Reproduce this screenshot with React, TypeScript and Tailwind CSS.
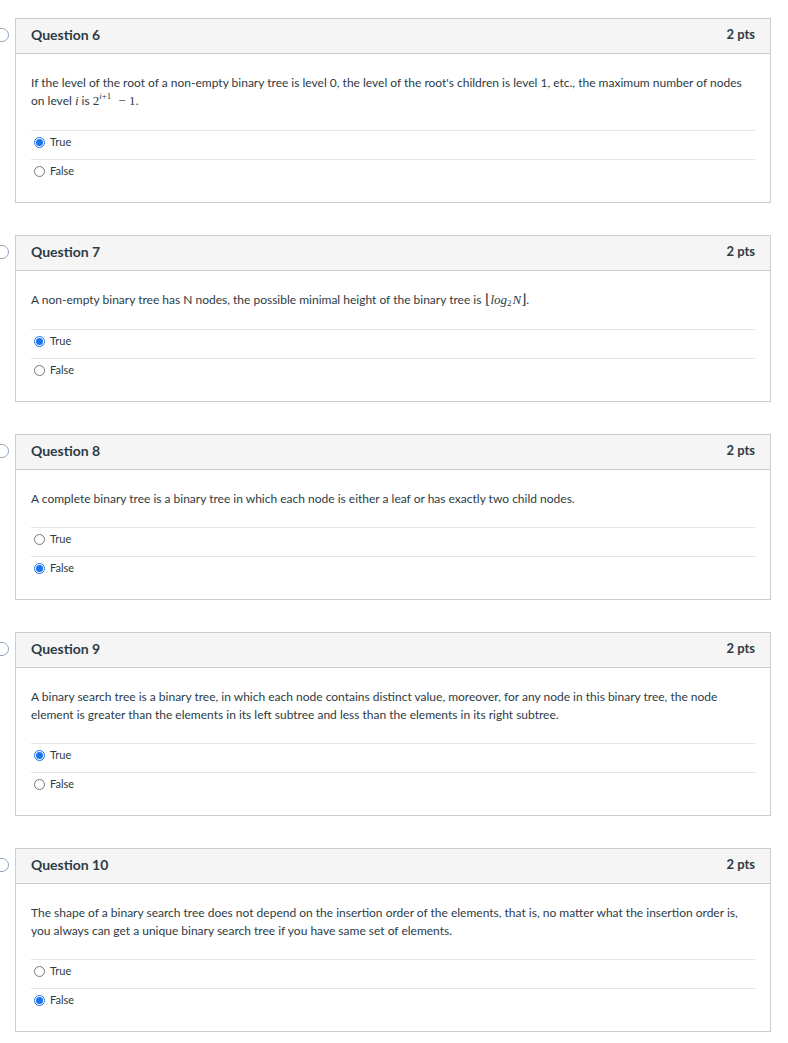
import React from "react";

type Question = {
  num: number;
  text: React.ReactNode;
  answer: "True" | "False";
  math?: boolean;
};

const Pow = () => (
  <span className="font-['Liberation_Serif',serif] text-[13px] leading-[0]">
    2<span className="text-[9px] align-[6px]"><i>i</i>+1</span>
    <span className="ml-[7px]">− 1.</span>
  </span>
);

const Floor = () => (
  <span className="font-['Liberation_Serif',serif] text-[13px] leading-[0] ml-[1px]">
    <span className="text-[14px]">⌊</span>
    <i>log</i>
    <span className="text-[9px] align-[-2px]">2</span>
    <i className="ml-[1px]">N</i>
    <span className="text-[14px]">⌋</span>
  </span>
);

const questions: Question[] = [
  {
    num: 6,
    text: (
      <>
        If the level of the root of a non-empty binary tree is level 0, the level of the root's children is level 1, etc., the maximum number of nodes on level{" "}
        <i className="font-['Liberation_Serif',serif] text-[13px] leading-[0]">i</i> is <Pow />
      </>
    ),
    answer: "True",
    math: true,
  },
  {
    num: 7,
    text: (
      <>
        A non-empty binary tree has N nodes, the possible minimal height of the binary tree is <Floor />.
      </>
    ),
    answer: "True",
    math: true,
  },
  {
    num: 8,
    text: "A complete binary tree is a binary tree in which each node is either a leaf or has exactly two child nodes.",
    answer: "False",
  },
  {
    num: 9,
    text: "A binary search tree is a binary tree, in which each node contains distinct value, moreover, for any node in this binary tree, the node element is greater than the elements in its left subtree and less than the elements in its right subtree.",
    answer: "True",
  },
  {
    num: 10,
    text: "The shape of a binary search tree does not depend on the insertion order of the elements, that is, no matter what the insertion order is, you always can get a unique binary search tree if you have same set of elements.",
    answer: "False",
  },
];

const Radio = ({ checked }: { checked: boolean }) =>
  checked ? (
    <span className="w-[11px] h-[11px] rounded-full border border-[#1a73e8] flex items-center justify-center">
      <span className="w-[7px] h-[7px] rounded-full bg-[#1a73e8]" />
    </span>
  ) : (
    <span className="w-[11px] h-[11px] rounded-full border border-[#767676] bg-white" />
  );

const QuestionCard = ({ q }: { q: Question }) => (
  <div className="relative pl-[15px] pr-[17px]">
    {/* flag marker, mostly off the left edge */}
    <svg className="absolute left-0 top-[9px]" width="10" height="16" viewBox="0 0 10 16">
      <path d="M0 1.5 H2 A6.5 6.5 0 0 1 2 14.5 H0" fill="none" stroke="#8fa6bd" strokeWidth="1" />
    </svg>

    <div className="border border-[#c7cdd1] bg-white">
      <div className="h-[35px] bg-[#f5f5f5] border-b border-[#c7cdd1] flex items-center justify-between px-[15px] pb-[3px]">
        <span className="text-[14px] font-bold text-[#2d3b45]">Question {q.num}</span>
        <span className="text-[13px] font-bold text-[#2d3b45]">2 pts</span>
      </div>

      <div className="px-[15px] pt-[20px] pb-[14px]">
        <p className="text-[12px] leading-[18px] text-[#2d3b45] pr-[10px]">{q.text}</p>

        <div className={q.math ? "mt-[20px]" : "mt-[19px]"}>
          {(["True", "False"] as const).map((opt) => (
            <div key={opt} className="h-[29px] border-t border-[#e2e5e7] flex items-center gap-[5px] pl-[3px] pb-[5px]">
              <Radio checked={q.answer === opt} />
              <span className="text-[11px] text-[#2d3b45]">{opt}</span>
            </div>
          ))}
        </div>
      </div>
    </div>
  </div>
);

export default function App() {
  return (
    <div className="w-[788px] min-h-screen bg-white pt-[18px] flex flex-col gap-[32px] font-['Lato',sans-serif]">
      {questions.map((q) => (
        <QuestionCard key={q.num} q={q} />
      ))}
    </div>
  );
}
